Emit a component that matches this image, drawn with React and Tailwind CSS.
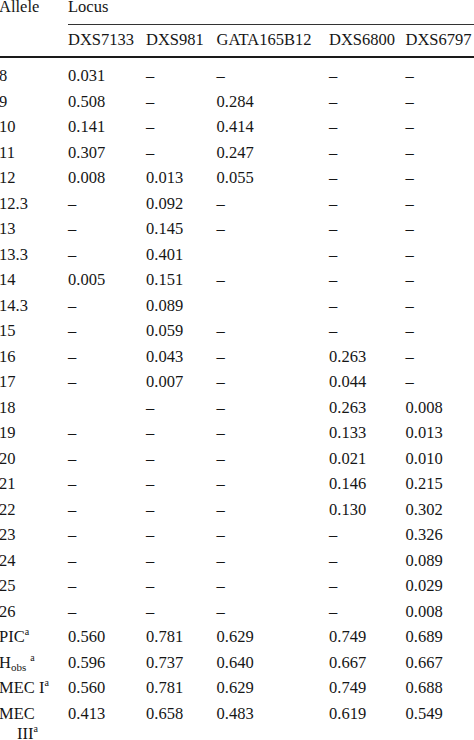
const rows = [
  ['8', '0.031', '–', '–', '–', '–'],
  ['9', '0.508', '–', '0.284', '–', '–'],
  ['10', '0.141', '–', '0.414', '–', '–'],
  ['11', '0.307', '–', '0.247', '–', '–'],
  ['12', '0.008', '0.013', '0.055', '–', '–'],
  ['12.3', '–', '0.092', '–', '–', '–'],
  ['13', '–', '0.145', '–', '–', '–'],
  ['13.3', '–', '0.401', '', '–', '–'],
  ['14', '0.005', '0.151', '–', '–', '–'],
  ['14.3', '–', '0.089', '', '–', '–'],
  ['15', '–', '0.059', '–', '–', '–'],
  ['16', '–', '0.043', '–', '0.263', '–'],
  ['17', '–', '0.007', '–', '0.044', '–'],
  ['18', '', '–', '–', '0.263', '0.008'],
  ['19', '–', '–', '–', '0.133', '0.013'],
  ['20', '–', '–', '–', '0.021', '0.010'],
  ['21', '–', '–', '–', '0.146', '0.215'],
  ['22', '–', '–', '–', '0.130', '0.302'],
  ['23', '–', '–', '–', '–', '0.326'],
  ['24', '–', '–', '–', '–', '0.089'],
  ['25', '–', '–', '–', '–', '0.029'],
  ['26', '–', '–', '–', '–', '0.008'],
];

const Sup = ({ children }) => (
  <sup className="text-[10px] -top-[7px]">{children}</sup>
);

const stats = [
  [<>PIC<Sup>a</Sup></>, '0.560', '0.781', '0.629', '0.749', '0.689'],
  [
    <>H<sub className="text-[11px] -bottom-[3px]">obs</sub><span className="ml-[4px]"><Sup>a</Sup></span></>,
    '0.596', '0.737', '0.640', '0.667', '0.667',
  ],
  [<>MEC I<Sup>a</Sup></>, '0.560', '0.781', '0.629', '0.749', '0.688'],
  [
    <>MEC<br /><span className="pl-[18px]">III<Sup>a</Sup></span></>,
    '0.413', '0.658', '0.483', '0.619', '0.549',
  ],
];

const cols = 'grid grid-cols-[69px_78px_70.5px_112.5px_76.5px_140px]';
const loci = ['DXS7133', 'DXS981', 'GATA165B12', 'DXS6800', 'DXS6797'];

function Row({ cells }) {
  return (
    <div className={`${cols} py-[2.75px] leading-[20px]`}>
      {cells.map((c, i) => (
        <div key={i} className="whitespace-nowrap">{c}</div>
      ))}
    </div>
  );
}

export default function App() {
  return (
    <div
      className="w-[474px] h-[740px] overflow-hidden bg-white text-[#161616] text-[16.5px]"
      style={{ fontFamily: '"Liberation Serif", "Times New Roman", serif' }}
    >
      <div className="w-[560px] -ml-[1px] -mt-[3px]">

        {/* Header */}
        <div className={cols}>
          <div className="row-span-2 leading-[20px] border-b-2 border-[#1a1a1a]">Allele</div>
          <div className="col-span-5 leading-[20px] pb-[7px] border-b border-[#333]">Locus</div>
          {loci.map(l => (
            <div key={l} className="leading-[20px] pt-[5px] pb-[6px] border-b-2 border-[#1a1a1a] whitespace-nowrap">
              {l}
            </div>
          ))}
        </div>

        {/* Body */}
        <div className="pt-[5.25px]">
          {rows.map(r => <Row key={r[0]} cells={r} />)}
          {stats.map((r, i) => <Row key={i} cells={r} />)}
        </div>
      </div>
    </div>
  );
}
